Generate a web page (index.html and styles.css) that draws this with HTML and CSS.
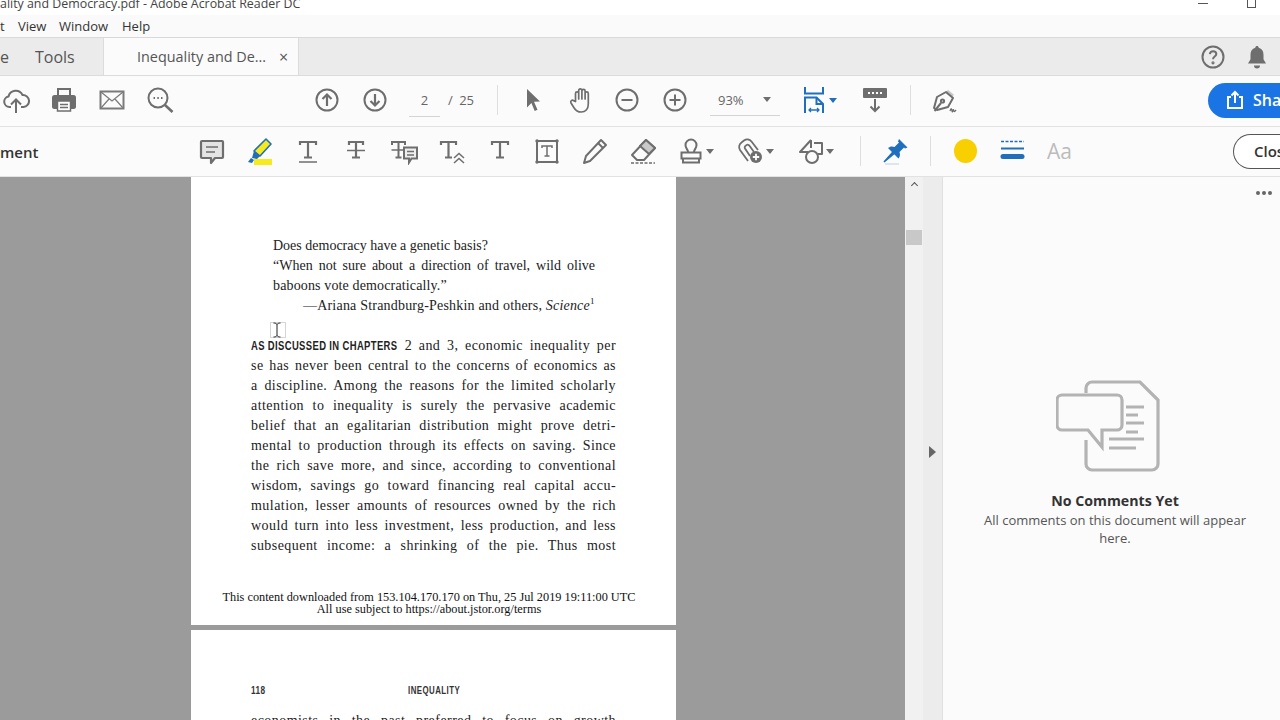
FILE: index.html
```html
<!DOCTYPE html>
<html lang="en">

<head>
  <meta charset="utf-8" />
  <title>Inequality and Democracy.pdf - Adobe Acrobat Reader DC</title>
  <link rel="stylesheet" href="styles.css">
</head>

<body>
  <div class="titlebar">
    <span class="title-text">ality and Democracy.pdf - Adobe Acrobat Reader DC</span>
    <span class="win-min"></span>
    <span class="win-max"></span>
  </div>

  <div class="menubar">
    <span class="menu-cut">t</span>
    <span class="menu-view">View</span>
    <span class="menu-window">Window</span>
    <span class="menu-help">Help</span>
  </div>

  <div class="tabs">
    <span class="tab-cut">e</span>
    <span class="tab-tools">Tools</span>
    <div class="tab-active">
      <span class="tab-name">Inequality and De...</span>
      <span class="tab-close">×</span>
    </div>
    <svg class="tab-help" width="26" height="26" viewBox="0 0 26 26" fill="none" stroke="#6e6e6e" stroke-width="2"><circle cx="13" cy="13" r="10.5"/><path d="M9.8 10.2c.3-2 1.600-3 3.300-3 1.900 0 3.200 1.200 3.200 2.800 0 2.500-3.300 2.600-3.300 5.200"/><circle cx="13" cy="18.800" r=".6"/></svg>
    <svg class="tab-bell" width="22" height="26" viewBox="0 0 22 26" fill="#6e6e6e"><path d="M11 2c1 0 1.600.7 1.700 1.700 3.300.8 4.800 3.400 4.800 7v4.500l2.500 4.300H2l2.500-4.300v-4.500c0-3.600 1.500-6.200 4.800-7C9.400 2.700 10 2 11 2z"/><path d="M8 21.500h6a3 3 0 0 1-6 0z"/></svg>
  </div>

  <div class="toolbar tb-main">
    <div class="cell"><svg width="28" height="28" viewBox="0 0 28 28" fill="none" stroke="#6e6e6e" stroke-width="2"><path d="M9 21H7.500a5.300 5.300 0 0 1-1-10.500A7.500 7.500 0 0 1 20.500 9a6 6 0 0 1 1 12H19"/><path d="M14 27V13.500M9 18.500l5-5 5 5"/></svg></div>
    <div class="cell"><svg width="28" height="28" viewBox="0 0 28 28"><path d="M8 3h12v7H8z" fill="none" stroke="#6e6e6e" stroke-width="2"/><rect x="2" y="9" width="24" height="14" rx="2.500" fill="#6e6e6e"/><rect x="7.500" y="15" width="13" height="10" fill="#fff" stroke="#6e6e6e" stroke-width="1.500"/><path d="M10 18.500h8M10 21.500h8" stroke="#6e6e6e" stroke-width="1.500"/></svg></div>
    <div class="cell"><svg width="28" height="28" viewBox="0 0 28 28" fill="none" stroke="#7a7a7a" stroke-width="2"><rect x="2.500" y="5.500" width="23" height="17" /><path d="M3 6l11 9 11-9M3 22l8-9M25 22l-8-9" stroke-width="1.200"/></svg></div>
    <div class="cell"><svg width="28" height="28" viewBox="0 0 28 28" fill="none" stroke="#6e6e6e" stroke-width="2"><circle cx="12" cy="12" r="9.500"/><path d="M19 19l7.500 7" stroke-width="2.600"/><path d="M7.500 12h1.500M11.300 12h1.500M15 12h1.500" stroke-width="2"/></svg></div>

    <div class="cell gap-119"><svg width="28" height="28" viewBox="0 0 28 28" fill="none" stroke="#6e6e6e" stroke-width="2"><circle cx="14" cy="14" r="10.500"/><path d="M14 20V8.500M9.500 13L14 8.500l4.500 4.500" stroke-width="2.200"/></svg></div>
    <div class="cell"><svg width="28" height="28" viewBox="0 0 28 28" fill="none" stroke="#6e6e6e" stroke-width="2"><circle cx="14" cy="14" r="10.500"/><path d="M14 8v11.500M9.500 15l4.500 4.500 4.500-4.500" stroke-width="2.200"/></svg></div>
    <div class="page-box">2</div>
    <div class="page-total">/ 25</div>
    <span class="sep sep-page"></span>
    <div class="cell gap-10"><svg width="28" height="28" viewBox="-1 0 28 28" fill="#6e6e6e"><path d="M8 3l13 12.500-6 .3 3.500 8-2.800 1.200-3.300-8L8 21.500z"/></svg></div>
    <div class="cell"><svg width="28" height="28" viewBox="-2 0 28 28" fill="none" stroke="#6e6e6e" stroke-width="1.700" stroke-linejoin="round"><path d="M7.500 15.500V7.500a1.600 1.600 0 0 1 3.200 0V13V4.500a1.600 1.600 0 0 1 3.200 0V13V5a1.600 1.600 0 0 1 3.200 0v8V7.500a1.600 1.600 0 0 1 3.200 0V18c0 5-3 8-7 8-3.500 0-5.500-1.200-7.300-4.300L3 17c-1-2 1-3.500 2.700-2.300z"/></svg></div>
    <div class="cell gap-n1"><svg width="28" height="28" viewBox="0 0 28 28" fill="none" stroke="#6e6e6e" stroke-width="2"><circle cx="14" cy="14" r="10.500"/><path d="M8.500 14h11"/></svg></div>
    <div class="cell"><svg width="28" height="28" viewBox="0 0 28 28" fill="none" stroke="#6e6e6e" stroke-width="2"><circle cx="14" cy="14" r="10.500"/><path d="M8.500 14h11M14 8.500v11"/></svg></div>
    <div class="zoom-box"><span>93%</span><i class="caret"></i></div>
    <div class="cell gap-10"><svg width="28" height="28" viewBox="0 0 28 28" fill="none" stroke="#1f6fbd" stroke-width="2"><path d="M5 1v6.500h18V1"/><path d="M5 27V11.500h11.500l6.500 6.500V27"/><path d="M16.500 11.500V18H23"/><path d="M9 24h10M11 22l-2 2 2 2M17 22l2 2-2 2" stroke-width="1.300"/></svg><i class="caret caret-blue"></i></div>
    <div class="cell gap-13"><svg width="28" height="28" viewBox="0 0 28 28" fill="none" stroke="#6e6e6e" stroke-width="2"><rect x="2" y="2" width="24" height="10" rx="1" fill="#6e6e6e" stroke="none"/><path d="M7 7h2M11 7h2M15 7h2M19 7h2" stroke="#fff" stroke-width="2"/><path d="M14 13v12M9.500 20.500L14 25l4.500-4.500" stroke-width="2"/></svg></div>
    <span class="sep gap-11"></span>
    <div class="cell gap-10"><svg width="28" height="28" viewBox="0 0 28 28" fill="none" stroke="#6e6e6e" stroke-width="2" stroke-linejoin="round"><path d="M16 5l6 5" stroke="#c9c9c9" stroke-width="3"/><path d="M15 6l7 6-5 9-11 3-3-2 3-11z"/><path d="M3.500 25l6.500-8"/><circle cx="11.500" cy="15" r="1.600"/><path d="M19 25c1-3 1.500-3 2 0s1-3 1.500-1 1 2 2.500 0" stroke-width="1.300"/></svg></div>
    <button class="btn-share"><svg width="20" height="20" viewBox="0 0 20 20" fill="none" stroke="#fff" stroke-width="2"><path d="M6 7H3v11h14V7h-3"/><path d="M10 13V2M6.500 5.500L10 2l3.500 3.500"/></svg><span>Sha</span></button>
  </div>

  <div class="toolbar tb-comment">
    <div class="tb-label">ment</div>
    <div class="cell"><svg width="28" height="28" viewBox="0 0 28 28" fill="#e4e4e4" stroke="#6e6e6e" stroke-width="2.200" stroke-linejoin="round"><path d="M4 4h20a1 1 0 0 1 1 1v15a1 1 0 0 1-1 1h-7l-4 5v-5H4a1 1 0 0 1-1-1V5a1 1 0 0 1 1-1z"/><path d="M8 10h12M8 15h9" stroke-width="1.500"/></svg></div>
    <div class="cell"><svg width="28" height="28" viewBox="0 0 28 28"><rect x="8" y="22" width="18" height="6" fill="#f7ea1c"/><path d="M20 2l5 5-11 12-6-5z" fill="#f7ea1c" stroke="#1f6fbd" stroke-width="1.600" stroke-linejoin="round"/><path d="M8 14l6 5-3 3-5-1z" fill="#1f6fbd"/><path d="M5 21l3 2-2 3-4-1z" fill="#1f6fbd"/></svg></div>
    <div class="cell"><svg width="28" height="28" viewBox="0 0 28 28" fill="none" stroke="#6e6e6e" stroke-width="2.200"><path d="M6 8V5h16v3M14 5v15.500M10 20.500h8" /><path d="M5 25h18" stroke-width="1.500"/></svg></div>
    <div class="cell"><svg width="28" height="28" viewBox="0 0 28 28" fill="none" stroke="#6e6e6e" stroke-width="2.200"><path d="M7 8V5h14v3M14 5v15.500M10 20.500h8"/><path d="M5 13.500h18" stroke-width="1.500"/></svg></div>
    <div class="cell"><svg width="28" height="28" viewBox="0 0 28 28" fill="none" stroke="#6e6e6e" stroke-width="2"><path d="M2 8V5h13v3M8.500 5v15.500M5.500 20.500h6"/><path d="M1.500 13h13" stroke-width="1.500"/><path d="M14 10.500h13v11h-5.500l-2.500 4v-4h-5z" fill="#eee"/><path d="M17 14.500h7M17 18h7" stroke-width="1.300"/></svg></div>
    <div class="cell"><svg width="28" height="28" viewBox="0 0 28 28" fill="none" stroke="#6e6e6e" stroke-width="2.200"><path d="M3 8V5h15v3M10.500 5v15.500M7 20.500h7"/><path d="M16 21l5-4.500 5 4.500M16 26l5-4.500 5 4.500" stroke-width="1.500"/></svg></div>
    <div class="cell"><svg width="28" height="28" viewBox="0 0 28 28" fill="none" stroke="#6e6e6e" stroke-width="2.200"><path d="M6 8V5h16v3M14 5v15.500M10 20.500h8"/></svg></div>
    <div class="cell gap-n1"><svg width="28" height="28" viewBox="0 0 28 28" fill="none" stroke="#6e6e6e" stroke-width="2"><rect x="4" y="4" width="20" height="21"/><path d="M9 11V9h10v2M14 9v10M11.500 19h5" stroke-width="1.500"/><g fill="#6e6e6e" stroke="none"><circle cx="4" cy="4" r="1.700"/><circle cx="24" cy="4" r="1.700"/><circle cx="4" cy="25" r="1.700"/><circle cx="24" cy="25" r="1.700"/></g></svg></div>
    <div class="cell"><svg width="28" height="28" viewBox="0 0 28 28" fill="none" stroke="#6e6e6e" stroke-width="2" stroke-linejoin="round"><path d="M20 3l5 5L9 24l-6 2 2-7z"/><path d="M17 6l5 5"/></svg></div>
    <div class="cell"><svg width="28" height="28" viewBox="0 0 28 28" fill="none" stroke="#6e6e6e" stroke-width="2" stroke-linejoin="round"><path d="M17 3l9 8-11 12H8l-5-5z"/><path d="M17 3l9 8-6 6-9-8z" fill="#c9c9c9"/><path d="M2 26h24" stroke-width="1.300" stroke-dasharray="3 1.500"/></svg></div>
    <div class="cell"><svg width="28" height="28" viewBox="0 0 28 28" fill="none" stroke="#6e6e6e" stroke-width="2"><path d="M11 15c0-2.500-2.500-3.500-2.500-7a5.500 5.500 0 0 1 11 0c0 3.500-2.500 4.500-2.500 7"/><path d="M4.500 15.500h19v6h-19zM6 21.500h16v4H6z"/></svg><i class="caret"></i></div>
    <div class="cell gap-12"><svg width="28" height="28" viewBox="0 0 28 28" fill="none" stroke="#6e6e6e" stroke-width="1.800"><path d="M11 24L3 13a5.500 5.500 0 0 1 1.500-7.500L7 3.500a5.500 5.500 0 0 1 7.500 1L21 13"/><path d="M13 19L8 11.500a2 2 0 0 1 .7-2.800l1-.7a2 2 0 0 1 2.800.7L17 15"/><circle cx="19" cy="20" r="6" fill="#6e6e6e" stroke="none"/><path d="M15.800 20h6.400M19 16.800v6.400" stroke="#fff" stroke-width="1.800"/></svg><i class="caret"></i></div>
    <div class="cell gap-12"><svg width="28" height="28" viewBox="0 0 28 28" fill="none" stroke="#6e6e6e" stroke-width="2" stroke-linejoin="round"><path d="M14 3L3 15h8"/><path d="M14 3v8M17 6h8v11h-4"/><circle cx="15" cy="20" r="6"/></svg><i class="caret"></i></div>
    <span class="sep gap-25"></span>
    <div class="cell gap-10"><svg width="28" height="28" viewBox="0 0 28 28" fill="#1f6fbd"><path d="M18 2l8.500 8.500-2.500 1-1-1-4.500 4.500c1 3 .3 5-1 6.500L7 11c1.800-1.500 4-2 6.500-1L18 5.500l-1-1z"/><path d="M11.500 15.500L3 25l9.500-8z" stroke="#1f6fbd" stroke-width="1.500"/><path d="M4 27h14" stroke="#cfe0f0" stroke-width="1.500"/></svg></div>
    <span class="sep gap-11"></span>
    <div class="cell gap-11"><span class="dot-color"></span></div>
    <div class="cell gap-n1"><svg width="28" height="28" viewBox="0 0 28 28" fill="none" stroke="#1f6fbd"><path d="M2 4.500h23" stroke-width="1.500" stroke-dasharray="3 1.500"/><path d="M2 11.500h23" stroke-width="2"/><path d="M4 19.500h19" stroke-width="5" stroke-linecap="round"/></svg></div>
    <div class="cell cell-aa">Aa</div>
    <button class="btn-close">Clos</button>
  </div>

  <div class="main">
    <div class="canvas">
      <div class="page page-one">
        <div class="epigraph">
          <div class="plain">Does democracy have a genetic basis?</div>
          <div class="just">“When not sure about a direction of travel, wild olive</div>
          <div class="plain baboons">baboons vote democratically.”</div>
          <div class="attrib">—Ariana Strandburg-Peshkin and others, <em>Science</em><sup>1</sup></div>
        </div>
        <div class="body-text">
          <div class="just"><span class="smallcaps">AS DISCUSSED IN CHAPTERS</span> 2 and 3, economic inequality per</div>
          <div class="just">se has never been central to the concerns of economics as</div>
          <div class="just">a discipline. Among the reasons for the limited scholarly</div>
          <div class="just">attention to inequality is surely the pervasive academic</div>
          <div class="just">belief that an egalitarian distribution might prove detri-</div>
          <div class="just">mental to production through its effects on saving. Since</div>
          <div class="just">the rich save more, and since, according to conventional</div>
          <div class="just">wisdom, savings go toward financing real capital accu-</div>
          <div class="just">mulation, lesser amounts of resources owned by the rich</div>
          <div class="just">would turn into less investment, less production, and less</div>
          <div class="just">subsequent income: a shrinking of the pie. Thus most</div>
        </div>
        <div class="jstor">This content downloaded from 153.104.170.170 on Thu, 25 Jul 2019 19:11:00 UTC<br>All use subject to https://about.jstor.org/terms</div>
        <!-- text cursor over the page -->
        <svg class="ibeam" width="16" height="16" viewBox="0 0 16 16" fill="none"><rect x=".5" y=".5" width="15" height="15" stroke="#aaa" stroke-dasharray="1 1"/><path d="M3.500 1c2 0 3 .5 3.500 1.500V13.500c-.5 1-1.500 1.500-3.500 1.500M10.500 1c-2 0-3 .5-3.500 1.500M10.500 15c-2 0-3-.5-3.500-1.500" stroke="#222"/></svg>
      </div>
      <div class="page page-two">
        <div class="running-head">
          <span class="folio">118</span>
          <span class="head-title">INEQUALITY</span>
        </div>
        <div class="body-text">
          <div class="just">economists in the past preferred to focus on growth</div>
        </div>
      </div>
    </div>

    <div class="scrollbar">
      <span class="scroll-up"></span>
      <span class="scroll-thumb"></span>
    </div>
    <div class="splitter"><span class="split-arrow"></span></div>

    <div class="panel">
      <div class="panel-more"><i></i><i></i><i></i></div>
      <svg class="panel-icon" width="104" height="92" viewBox="0 0 104 92" fill="none" stroke="#b3b3b3" stroke-width="3.200">
        <path d="M30 13V8a6 6 0 0 1 6-6h48l18 18v64a6 6 0 0 1-6 6H36a6 6 0 0 1-6-6V60"/>
        <path d="M6 15h55a5 5 0 0 1 5 5v25a5 5 0 0 1-5 5H46v17L32 50H6a5 5 0 0 1-5-5V20a5 5 0 0 1 5-5z"/>
        <path d="M70 27h18M70 35h12M70 43h18M70 52h12M53 59h35M53 68h27"/>
      </svg>
      <div class="panel-title">No Comments Yet</div>
      <div class="panel-text">All comments on this document will appear here.</div>
    </div>
  </div>
</body>

</html>
```

FILE: styles.css
```css
html, body {
  margin: 0;
  padding: 0;
  height: 720px;
  overflow: hidden;
}

body {
  font-family: "Open Sans", "Noto Sans", sans-serif;
  background: #fff;
  color: #333;
}

.titlebar {
  height: 15px;
  background: #fff;
  display: flex;
  font-size: 12.4px;
  line-height: 8px;
  white-space: nowrap;
  color: #444;
}

.title-text {
  width: 1198px;
}

.win-min {
  width: 10px;
  height: 1px;
  background: #555;
  margin-top: 3px;
}

.win-max {
  width: 7px;
  height: 7px;
  border: 1px solid #555;
  border-top: 0;
  margin-left: 39px;
}

.menubar {
  height: 22px;
  background: #fafafa;
  border-bottom: 1px solid #d9d9d9;
  display: flex;
  align-items: center;
  font-size: 13px;
  color: #333;
}

.menu-cut { width: 18px; }
.menu-view { width: 41px; }
.menu-window { width: 63px; }

.tabs {
  height: 37px;
  background: #ebebeb;
  border-bottom: 1px solid #dcdcdc;
  display: flex;
  align-items: center;
  font-size: 16px;
  color: #555;
}

.tab-cut { width: 35px; }
.tab-tools { width: 68px; }

.tab-active {
  width: 196px;
  height: 37px;
  box-sizing: border-box;
  padding-left: 33px;
  background: #fbfbfb;
  border-left: 1px solid #dcdcdc;
  border-right: 1px solid #dcdcdc;
  display: flex;
  align-items: center;
  font-size: 14.4px;
  color: #555;
}

.tab-name { width: 142px; }
.tab-close { font-size: 16px; color: #555; }

.tab-help { margin-left: 901px; }
.tab-bell { margin-left: 20px; }

.toolbar {
  background: #fbfbfb;
  border-bottom: 1px solid #e2e2e2;
  display: flex;
  align-items: center;
  white-space: nowrap;
  overflow: hidden;
}

.tb-main {
  height: 48px;
  padding-bottom: 2px;
}

.tb-comment {
  height: 48px;
  padding-bottom: 1px;
}

.tb-main > :first-child {
  margin-left: -8px;
}

.cell {
  width: 48px;
  flex: none;
  box-sizing: border-box;
  padding-left: 10px;
  display: flex;
  align-items: center;
  gap: 1px;
}

.gap-n1 { margin-left: -1px; }
.gap-10 { margin-left: 10px; }
.gap-11 { margin-left: 11px; }
.gap-12 { margin-left: 12px; }
.gap-13 { margin-left: 13px; }
.gap-25 { margin-left: 25px; }
.gap-119 { margin-left: 119px; }

.sep {
  width: 1px;
  height: 30px;
  flex: none;
  background: #dedede;
}

.sep-page { margin-left: 22px; }

.caret {
  width: 0;
  height: 0;
  border-left: 4px solid transparent;
  border-right: 4px solid transparent;
  border-top: 5px solid #6e6e6e;
}

.caret-blue { border-top-color: #1f6fbd; }

.page-box {
  width: 31px;
  height: 32px;
  flex: none;
  margin-left: 10px;
  line-height: 32px;
  text-align: center;
  font-size: 13px;
  color: #666;
  border-bottom: 1px solid #d5d5d5;
}

.page-total {
  width: 27px;
  flex: none;
  margin-left: 8px;
  font-size: 13px;
  word-spacing: 3px;
  color: #666;
}

.zoom-box {
  width: 70px;
  height: 32px;
  flex: none;
  margin-left: 11px;
  padding: 0 9px 0 8px;
  box-sizing: border-box;
  display: flex;
  align-items: center;
  justify-content: space-between;
  font-size: 13px;
  color: #666;
  border-bottom: 1px solid #d5d5d5;
}

.btn-share {
  width: 100px;
  height: 35px;
  flex: none;
  margin-left: 239px;
  padding: 0 0 0 17px;
  border: 0;
  border-radius: 18px 0 0 18px;
  background: #1b74e4;
  color: #fff;
  font: 600 16px "Open Sans", sans-serif;
  display: flex;
  align-items: center;
  gap: 8px;
}

.tb-label {
  width: 188px;
  flex: none;
  padding-top: 1px;
  font-size: 15px;
  font-weight: 600;
  color: #333;
}

.dot-color {
  width: 23px;
  height: 24px;
  margin-left: 2px;
  border-radius: 50%;
  background: #f8cf00;
}

.cell-aa {
  font-size: 21px;
  color: #bbb;
  font-family: "Open Sans", sans-serif;
}

.btn-close {
  width: 90px;
  height: 35px;
  flex: none;
  margin-left: 148px;
  padding: 0 0 0 20px;
  text-align: left;
  background: #fff;
  border: 1px solid #555;
  border-right: 0;
  border-radius: 18px 0 0 18px;
  color: #333;
  font: 600 15px "Open Sans", sans-serif;
}

.main {
  height: 543px;
  display: flex;
}

.canvas {
  width: 905px;
  flex: none;
  background: #9b9b9b;
  padding-left: 191px;
  box-sizing: border-box;
  overflow: hidden;
}

.page {
  width: 485px;
  background: #fff;
  box-sizing: border-box;
  font-family: "Liberation Serif", serif;
  font-size: 14px;
  line-height: 20px;
  color: #222;
  white-space: nowrap;
  position: relative;
}

.page-one {
  height: 448px;
  padding-top: 59px;
}

.page-two {
  margin-top: 5px;
  height: 200px;
  padding-top: 53px;
}

.epigraph {
  margin-left: 82px;
  width: 322px;
}

.baboons {
  letter-spacing: .14px;
}

.attrib {
  padding-left: 30px;
  letter-spacing: .2px;
}

.attrib sup {
  font-size: 9px;
  line-height: 0;
}

.body-text {
  margin-left: 60px;
  width: 365px;
  margin-top: 20px;
  letter-spacing: .45px;
}

.page-two .body-text {
  margin-top: 14px;
}

.just {
  text-align: justify;
  text-align-last: justify;
}

.smallcaps,
.running-head {
  font-family: "Liberation Sans", sans-serif;
  font-weight: bold;
}

/* no condensed face installed, so squeeze the sans */
.smallcaps {
  display: inline-block;
  font-size: 12.5px;
  letter-spacing: .5px;
  transform: scaleX(.755);
  transform-origin: left center;
  margin-right: -47px;
}

.jstor {
  margin-top: 35px;
  text-align: center;
  font-size: 12.3px;
  line-height: 12px;
  color: #111;
  margin-left: -9px;
}

.running-head {
  margin-left: 60px;
  width: 365px;
  display: flex;
  font-size: 10.5px;
  line-height: 14px;
  letter-spacing: .6px;
  color: #333;
}

.folio {
  width: 157px;
  transform: scaleX(.78);
  transform-origin: left center;
}

.head-title {
  transform: scaleX(.75);
  transform-origin: left center;
}

.ibeam {
  position: absolute;
  left: 79px;
  top: 145px;
}

.scrollbar {
  width: 18px;
  flex: none;
  background: #f1f1f1;
  display: flex;
  flex-direction: column;
  align-items: center;
}

.scroll-up {
  width: 4px;
  height: 4px;
  margin-top: 6px;
  border-top: 1.500px solid #555;
  border-left: 1.500px solid #555;
  transform: rotate(45deg);
}

.scroll-thumb {
  width: 16px;
  height: 15px;
  margin-top: 42px;
  background: #c8c8c8;
}

.splitter {
  width: 20px;
  flex: none;
  background: #ececec;
  border-right: 1px solid #e0e0e0;
  box-sizing: border-box;
  display: flex;
  align-items: center;
  justify-content: center;
}

.split-arrow {
  width: 0;
  height: 0;
  margin-top: 7px;
  border-top: 6px solid transparent;
  border-bottom: 6px solid transparent;
  border-left: 7px solid #666;
}

.panel {
  width: 337px;
  flex: none;
  box-sizing: border-box;
  padding-left: 7px;
  background: #fbfbfb;
  display: flex;
  flex-direction: column;
  align-items: center;
}

.panel-more {
  align-self: flex-end;
  margin: 14px 8px 0 0;
  height: 4px;
  display: flex;
  gap: 2px;
}

.panel-more i {
  width: 4px;
  height: 4px;
  border-radius: 50%;
  background: #666;
}

.panel-icon {
  margin: 185px 14px 0 0;
}

.panel-title {
  margin-top: 20px;
  font-size: 14.2px;
  font-weight: 700;
  line-height: 18px;
  color: #333;
}

.panel-text {
  width: 280px;
  margin-top: 1px;
  text-align: center;
  font-size: 13px;
  line-height: 18px;
  color: #555;
}
```
